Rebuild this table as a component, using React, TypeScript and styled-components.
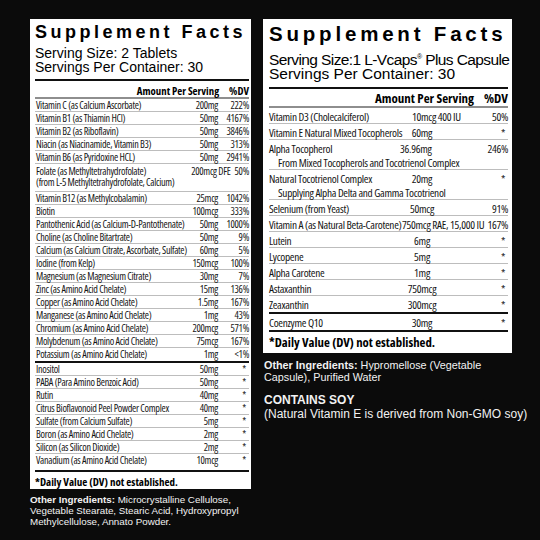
import React from "react";
import styled, { createGlobalStyle, css } from "styled-components";

const GlobalStyle = createGlobalStyle`
	html, body {
		margin: 0;
		padding: 0;
		background: #0b0b0b;
	}
	body {
		font-family: "Liberation Sans", Arial, sans-serif;
	}
`;

const condensed = css`
	font-family: "Open Sans", "Liberation Sans", sans-serif;
	font-stretch: 75%;
`;

const Page = styled.div`
	width: 540px;
	height: 540px;
	box-sizing: border-box;
	padding: 19px 0 0 30px;
	display: flex;
	align-items: flex-start;
	gap: 12px;
	background: #0b0b0b;
	overflow: hidden;
`;

const Column = styled.div<{ $w: number }>`
	flex: none;
	width: ${(p) => p.$w}px;
	display: flex;
	flex-direction: column;
`;

const Panel = styled.section<{ $lg?: boolean }>`
	background: #fff;
	color: #151515;
	padding: ${(p) => (p.$lg ? "5px 4px 4px 6px" : "4px 2px 1px 5px")};
`;

const Title = styled.h1<{ $lg?: boolean }>`
	margin: 0;
	color: #000;
	white-space: nowrap;
	font-family: "Liberation Sans", Arial, sans-serif;
	font-weight: bold;
	font-size: ${(p) => (p.$lg ? 20.5 : 18)}px;
	line-height: ${(p) => (p.$lg ? 20 : 18)}px;
	letter-spacing: ${(p) => (p.$lg ? 3.8 : 3.5)}px;
`;

const Serving = styled.div<{ $lg?: boolean }>`
	margin-top: ${(p) => (p.$lg ? 9 : 5)}px;
	padding-bottom: ${(p) => (p.$lg ? 6 : 5)}px;
	border-bottom: 2px solid #111;
	font-size: ${(p) => (p.$lg ? 15.5 : 14)}px;
	line-height: 14px;
	color: #000;
	white-space: nowrap;
`;

const Tight = styled.div`
	letter-spacing: -0.6px;
	sup {
		font-size: 7px;
		vertical-align: 6px;
		line-height: 0;
	}
`;

const Head = styled.div<{ $lg?: boolean }>`
	display: flex;
	justify-content: flex-end;
	gap: 10px;
	padding-top: ${(p) => (p.$lg ? 2 : 3)}px;
	border-bottom: 2px solid #8e8e8e;
	${condensed}
	font-weight: bold;
	font-size: ${(p) => (p.$lg ? 13 : 10.8)}px;
	line-height: ${(p) => (p.$lg ? 15 : 13)}px;
	color: #000;
	white-space: nowrap;
`;

const Block = styled.div<{ $ruled?: boolean; $tail?: number }>`
	${(p) =>
		p.$ruled &&
		css`
			border-top: 2px solid #111;
		`}
	padding-bottom: ${(p) => p.$tail ?? 0}px;
`;

const Row = styled.div<{ $lg?: boolean; $double?: boolean }>`
	display: grid;
	grid-template-columns: ${(p) =>
		p.$lg ? "minmax(0, 1fr) 48px 62px" : "minmax(0, 1fr) 52px 31px"};
	align-items: start;
	padding: ${(p) =>
		p.$lg ? "2px 0 0 0" : p.$double ? "2px 0 3px 1px" : "1px 0 0 1px"};
	border-bottom: 1px solid #bdbdbd;
	${condensed}
	font-size: ${(p) => (p.$lg ? 11.3 : 10.2)}px;
	line-height: ${(p) => (p.$lg ? 13 : 11)}px;
	letter-spacing: -0.3px;
	white-space: nowrap;

	&:last-child {
		border-bottom-color: transparent;
	}
`;

const Name = styled.span``;

const Amount = styled.span<{ $lg?: boolean; $start?: number }>`
	text-align: ${(p) => (p.$lg ? "center" : "right")};
	${(p) =>
		p.$start !== undefined &&
		css`
			justify-self: start;
			margin-left: ${p.$start}px;
		`}
`;

const Dv = styled.span<{ $star?: boolean }>`
	text-align: right;
	padding-right: ${(p) => (p.$star ? 3 : 0)}px;
`;

const Combined = styled.span`
	grid-column: 2 / 4;
	justify-self: end;
	display: flex;
	gap: 4px;
`;

const Sub = styled.span<{ $lg?: boolean }>`
	grid-column: 1 / -1;
	padding-left: ${(p) => (p.$lg ? 9 : 0)}px;
	margin-top: ${(p) => (p.$lg ? 1 : 0)}px;
`;

const Footnote = styled.div<{ $lg?: boolean }>`
	border-top: 2px solid #111;
	padding-top: 3px;
	${condensed}
	font-weight: bold;
	font-size: ${(p) => (p.$lg ? 12.8 : 11)}px;
	line-height: ${(p) => (p.$lg ? 14 : 13)}px;
	color: #000;
	white-space: nowrap;
`;

const Notes = styled.p<{ $lg?: boolean }>`
	margin: ${(p) => (p.$lg ? "6px 0 0 1px" : "5px 0 0 0")};
	color: #f2f2f2;
	font-size: ${(p) => (p.$lg ? 10.8 : 9.8)}px;
	line-height: ${(p) => (p.$lg ? 12 : 11)}px;
	white-space: nowrap;
`;

const Allergen = styled.div`
	margin: 10px 0 0 1px;
	color: #f2f2f2;
	font-size: 12px;
	line-height: 14px;
	white-space: nowrap;

	strong {
		display: block;
	}
`;

type Fact = {
	name: string;
	amount: string;
	dv: string;
	sub?: string;
	start?: number;
	joined?: boolean;
};

const leftMain: Fact[] = [
	{ name: "Vitamin C (as Calcium Ascorbate)", amount: "200mg", dv: "222%" },
	{ name: "Vitamin B1 (as Thiamin HCl)", amount: "50mg", dv: "4167%" },
	{ name: "Vitamin B2 (as Riboflavin)", amount: "50mg", dv: "3846%" },
	{ name: "Niacin (as Niacinamide, Vitamin B3)", amount: "50mg", dv: "313%" },
	{ name: "Vitamin B6 (as Pyridoxine HCL)", amount: "50mg", dv: "2941%" },
	{
		name: "Folate (as Methyltetrahydrofolate)",
		sub: "(from L-5 Methyltetrahydrofolate, Calcium)",
		amount: "200mcg DFE",
		dv: "50%",
		joined: true,
	},
	{ name: "Vitamin B12 (as Methylcobalamin)", amount: "25mcg", dv: "1042%" },
	{ name: "Biotin", amount: "100mcg", dv: "333%" },
	{ name: "Pantothenic Acid (as Calcium-D-Pantothenate)", amount: "50mg", dv: "1000%" },
	{ name: "Choline (as Choline Bitartrate)", amount: "50mg", dv: "9%" },
	{ name: "Calcium (as Calcium Citrate, Ascorbate, Sulfate)", amount: "60mg", dv: "5%" },
	{ name: "Iodine (from Kelp)", amount: "150mcg", dv: "100%" },
	{ name: "Magnesium (as Magnesium Citrate)", amount: "30mg", dv: "7%" },
	{ name: "Zinc (as Amino Acid Chelate)", amount: "15mg", dv: "136%" },
	{ name: "Copper (as Amino Acid Chelate)", amount: "1.5mg", dv: "167%" },
	{ name: "Manganese (as Amino Acid Chelate)", amount: "1mg", dv: "43%" },
	{ name: "Chromium (as Amino Acid Chelate)", amount: "200mcg", dv: "571%" },
	{ name: "Molybdenum (as Amino Acid Chelate)", amount: "75mcg", dv: "167%" },
	{ name: "Potassium (as Amino Acid Chelate)", amount: "1mg", dv: "<1%" },
];

const leftExtra: Fact[] = [
	{ name: "Inositol", amount: "50mg", dv: "*" },
	{ name: "PABA (Para Amino Benzoic Acid)", amount: "50mg", dv: "*" },
	{ name: "Rutin", amount: "40mg", dv: "*" },
	{ name: "Citrus Bioflavonoid Peel Powder Complex", amount: "40mg", dv: "*" },
	{ name: "Sulfate (from Calcium Sulfate)", amount: "5mg", dv: "*" },
	{ name: "Boron (as Amino Acid Chelate)", amount: "2mg", dv: "*" },
	{ name: "Silicon (as Silicon Dioxide)", amount: "2mg", dv: "*" },
	{ name: "Vanadium (as Amino Acid Chelate)", amount: "10mcg", dv: "*" },
];

const rightMain: Fact[] = [
	{ name: "Vitamin D3 (Cholecalciferol)", amount: "10mcg 400 IU", dv: "50%", start: 14 },
	{ name: "Vitamin E Natural Mixed Tocopherols", amount: "60mg", dv: "*" },
	{
		name: "Alpha Tocopherol",
		sub: "From Mixed Tocopherols and Tocotrienol Complex",
		amount: "36.96mg",
		dv: "246%",
		start: 2,
	},
	{
		name: "Natural Tocotrienol Complex",
		sub: "Supplying Alpha Delta and Gamma Tocotrienol",
		amount: "20mg",
		dv: "*",
	},
	{ name: "Selenium (from Yeast)", amount: "50mcg", dv: "91%" },
	{
		name: "Vitamin A (as Natural Beta-Carotene)",
		amount: "750mcg RAE, 15,000 IU",
		dv: "167%",
		start: 4,
	},
	{ name: "Lutein", amount: "6mg", dv: "*" },
	{ name: "Lycopene", amount: "5mg", dv: "*" },
	{ name: "Alpha Carotene", amount: "1mg", dv: "*" },
	{ name: "Astaxanthin", amount: "750mcg", dv: "*" },
	{ name: "Zeaxanthin", amount: "300mcg", dv: "*" },
];

const rightExtra: Fact[] = [{ name: "Coenzyme Q10", amount: "30mg", dv: "*" }];

function FactRow({ fact, lg }: { fact: Fact; lg?: boolean }) {
	const star = fact.dv === "*";
	return (
		<Row $lg={lg} $double={!!fact.sub}>
			<Name>{fact.name}</Name>
			{fact.joined ? (
				<Combined>
					<span>{fact.amount}</span>
					<span>{fact.dv}</span>
				</Combined>
			) : (
				<>
					<Amount $lg={lg} $start={fact.start}>
						{fact.amount}
					</Amount>
					<Dv $star={star}>{fact.dv}</Dv>
				</>
			)}
			{fact.sub && <Sub $lg={lg}>{fact.sub}</Sub>}
		</Row>
	);
}

export default function App() {
	return (
		<>
			<GlobalStyle />
			<Page>
				<Column $w={221}>
					<Panel>
						<Title>Supplement Facts</Title>
						<Serving>
							<div>Serving Size: 2 Tablets</div>
							<div>Servings Per Container: 30</div>
						</Serving>
						<Head>
							<span>Amount Per Serving</span>
							<span>%DV</span>
						</Head>
						<Block>
							{leftMain.map((f) => (
								<FactRow key={f.name} fact={f} />
							))}
						</Block>
						<Block $ruled $tail={3}>
							{leftExtra.map((f) => (
								<FactRow key={f.name} fact={f} />
							))}
						</Block>
						<Footnote>*Daily Value (DV) not established.</Footnote>
					</Panel>
					<Notes>
						<b>Other Ingredients:</b> Microcrystalline Cellulose,
						<br />
						Vegetable Stearate, Stearic Acid, Hydroxypropyl
						<br />
						Methylcellulose, Annato Powder.
					</Notes>
				</Column>

				<Column $w={249}>
					<Panel $lg>
						<Title $lg>Supplement Facts</Title>
						<Serving $lg>
							<Tight>
								Serving Size:1 L-Vcaps<sup>®</sup> Plus Capsule
							</Tight>
							<div>Servings Per Container: 30</div>
						</Serving>
						<Head $lg>
							<span>Amount Per Serving</span>
							<span>%DV</span>
						</Head>
						<Block>
							{rightMain.map((f) => (
								<FactRow key={f.name} fact={f} lg />
							))}
						</Block>
						<Block $ruled>
							{rightExtra.map((f) => (
								<FactRow key={f.name} fact={f} lg />
							))}
						</Block>
						<Footnote $lg>*Daily Value (DV) not established.</Footnote>
					</Panel>
					<Notes $lg>
						<b>Other Ingredients:</b> Hypromellose (Vegetable
						<br />
						Capsule), Purified Water
					</Notes>
					<Allergen>
						<strong>CONTAINS SOY</strong>
						(Natural Vitamin E is derived from Non-GMO soy)
					</Allergen>
				</Column>
			</Page>
		</>
	);
}
